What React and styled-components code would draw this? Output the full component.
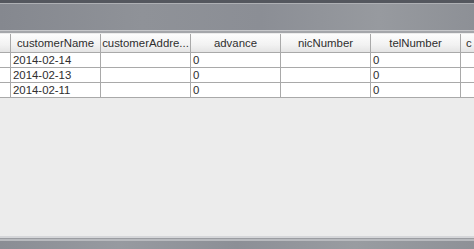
import styled, { createGlobalStyle } from "styled-components";

const GlobalStyle = createGlobalStyle`
  html, body {
    margin: 0;
    padding: 0;
    background: #ececec;
    overflow: hidden;
  }
`;

const columns = [
  { key: "hidden", title: "", width: 11 },
  { key: "customerName", title: "customerName", width: 90 },
  { key: "customerAddress", title: "customerAddre...", width: 90 },
  { key: "advance", title: "advance", width: 90 },
  { key: "nicNumber", title: "nicNumber", width: 90 },
  { key: "telNumber", title: "telNumber", width: 90 },
  { key: "c", title: "c", width: 90, clipped: true },
];

const rows = [
  { customerName: "2014-02-14", advance: "0", telNumber: "0" },
  { customerName: "2014-02-13", advance: "0", telNumber: "0" },
  { customerName: "2014-02-11", advance: "0", telNumber: "0" },
];

export default function App() {
  return (
    <>
      <GlobalStyle />
      <Frame>
        <TopBar />
        <TableArea>
          <Table>
            <Row>
              {columns.map((c) => (
                <HeadCell key={c.key} w={c.width} clipped={c.clipped}>
                  {c.title}
                </HeadCell>
              ))}
            </Row>
            {rows.map((r, i) => (
              <Row key={i}>
                {columns.map((c) => (
                  <Cell key={c.key} w={c.width}>
                    {r[c.key] || ""}
                  </Cell>
                ))}
              </Row>
            ))}
          </Table>
        </TableArea>
        <BottomBar />
      </Frame>
    </>
  );
}

const Frame = styled.div`
  width: 474px;
  height: 249px;
  display: flex;
  flex-direction: column;
  font-family: "Liberation Sans", Arial, sans-serif;
  font-size: 11.4px;
  color: #2e2e2e;
`;

const TopBar = styled.div`
  height: 27px;
  border-top: 3px solid #54575e;
  border-bottom: 3px solid #a4a6aa;
  box-shadow: inset 0 1px 0 #aeb0b4;
  background: linear-gradient(90deg, #85888f 0%, #8f9298 30%, #8b8e95 55%, #979a9f 80%, #8d9096 100%);
  flex-shrink: 0;
  position: relative;
  &::after {
    content: "";
    position: absolute;
    left: 0;
    right: 0;
    bottom: -1px;
    height: 1px;
    background: #c8c9cc;
  }
`;

const TableArea = styled.div`
  flex: 1;
  background: #ececec;
  overflow: hidden;
  margin-top: 1px;
`;

const Table = styled.div`
  display: flex;
  flex-direction: column;
  width: max-content;
`;

const Row = styled.div`
  display: flex;
`;

const HeadCell = styled.div`
  width: ${({ w }) => w}px;
  height: 19px;
  box-sizing: border-box;
  border-right: 1px solid #a9a9a9;
  border-bottom: 1px solid #a9a9a9;
  background: linear-gradient(#fdfdfd, #f2f2f2 60%, #e4e4e4);
  text-align: ${({ clipped }) => (clipped ? "left" : "center")};
  padding-left: ${({ clipped }) => (clipped ? "5px" : "0")};
  line-height: 18px;
  white-space: nowrap;
  overflow: hidden;
`;

const Cell = styled.div`
  width: ${({ w }) => w}px;
  height: 15px;
  box-sizing: border-box;
  border-right: 1px solid #a9a9a9;
  border-bottom: 1px solid #a9a9a9;
  background: #fff;
  padding-left: 2px;
  line-height: 15px;
  white-space: nowrap;
  overflow: hidden;
`;

const BottomBar = styled.div`
  height: 11px;
  flex-shrink: 0;
  border-top: 2px solid #d5d6d9;
  box-shadow: inset 0 1px 0 #9a9ca1, inset 0 3px 0 #b8babe;
  background: linear-gradient(90deg, #8a8d94 0%, #979aa0 25%, #8c8f96 50%, #999ca1 75%, #8e9197 100%);
`;
